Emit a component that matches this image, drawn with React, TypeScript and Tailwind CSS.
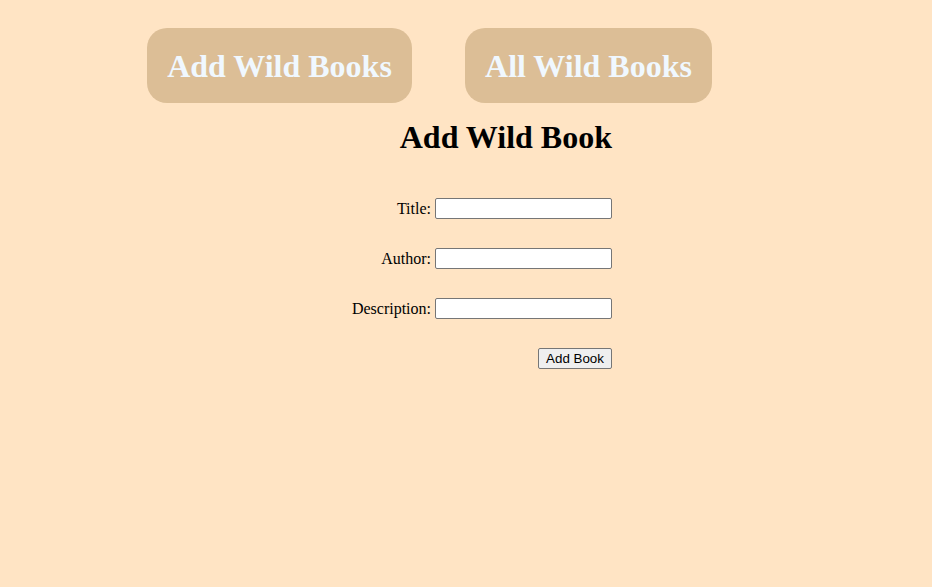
import React from "react";

export default function App() {
  const serif = { fontFamily: '"Liberation Serif", "Times New Roman", serif' };
  const rows = ["Title:", "Author:", "Description:"];
  return (
    <div className="min-h-[587px] w-full bg-[#ffe4c4] text-black" style={serif}>
      <div className="flex gap-[53px] pl-[147px] pt-[28px]">
        <button className="flex h-[75px] w-[265px] items-center justify-center rounded-[20px] bg-[#dcbe96] text-[32px] font-bold text-[#f0f8ff]">
          Add Wild Books
        </button>
        <button className="flex h-[75px] w-[247px] items-center justify-center rounded-[20px] bg-[#dcbe96] text-[32px] font-bold text-[#f0f8ff]">
          All Wild Books
        </button>
      </div>
      <div className="flex w-[612px] flex-col items-end pt-[16px]">
        <h1 className="text-[32px] font-bold leading-[37px]">Add Wild Book</h1>
        <form className="mt-[42px] flex flex-col items-end gap-[29px]" onSubmit={(e) => e.preventDefault()}>
          {rows.map((r) => (
            <div key={r} className="flex h-[21px] items-center gap-[4px]">
              <label className="text-[16px] leading-[21px]">{r}</label>
              <input
                type="text"
                className="h-[21px] w-[177px] rounded-[2px] border border-[#767676] bg-white px-[2px] text-[13px]"
              />
            </div>
          ))}
          <button
            type="submit"
            className="h-[21px] w-[74px] rounded-[2px] border border-[#767676] bg-[#efefef] text-[13.33px] leading-[19px] text-black"
            style={{ fontFamily: '"Liberation Sans", Arial, sans-serif' }}
          >
            Add Book
          </button>
        </form>
      </div>
    </div>
  );
}
